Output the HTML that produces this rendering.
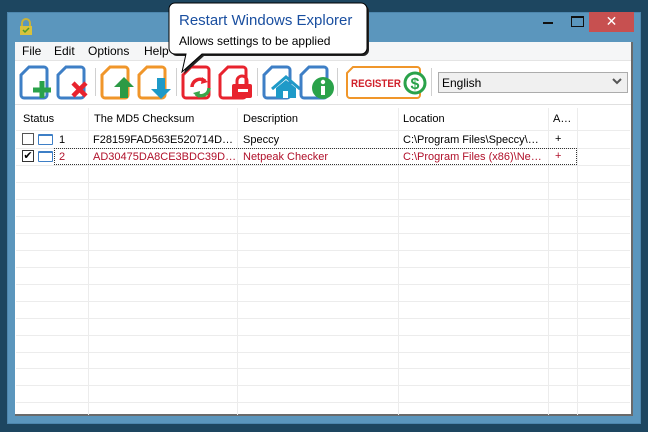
<!DOCTYPE html>
<html><head><style>
body{margin:0;width:648px;height:432px;background:#1d4660;position:relative;overflow:hidden;font-family:"Liberation Sans",sans-serif;font-size:11px;color:#000}
.a{position:absolute}
.t{position:absolute;white-space:nowrap;font-size:11px}
.red{color:#b0102a}
.hl{position:absolute;left:16px;width:614px;height:1px;background:#ececec}
.vl{position:absolute;top:108px;width:1px;height:307px;background:#ececec}
.sep{position:absolute;top:68px;width:1px;height:28px;background:#d0d0d0}
</style></head><body>
<div class="a" style="left:7px;top:12px;width:634px;height:412px;background:#5b96bd;border:1px solid #4d86ad;box-sizing:border-box"></div>
<svg class="a" style="left:19px;top:18px" width="14" height="18"><path d="M3 8V5a4 4 0 0 1 8 0v3" fill="none" stroke="#c9b23a" stroke-width="2"/><rect x="1" y="8" width="12" height="9" fill="#d8c23c"/><path d="M4 12l2 2 4-4" stroke="#4a9a2a" stroke-width="1.5" fill="none"/></svg>
<div class="a" style="left:543px;top:22px;width:10px;height:2px;background:#111"></div>
<div class="a" style="left:571px;top:16px;width:11px;height:8px;border:1px solid #111;border-top-width:2px"></div>
<div class="a" style="left:589px;top:12px;width:45px;height:20px;background:#c75050;color:#fff;font-size:14px;text-align:center;line-height:19px">✕</div>

<div class="a" style="left:15px;top:42px;width:618px;height:374px;background:#fff;border-right:2px solid #6a6a6a;border-bottom:2px solid #6a6a6a;box-sizing:border-box"></div>
<div class="a" style="left:15px;top:42px;width:616px;height:18px;background:#f5f6f7;border-bottom:1px solid #e4e4e4"></div>
<div class="t" style="left:22px;top:44px;font-size:12px">File</div>
<div class="t" style="left:54px;top:44px;font-size:12px">Edit</div>
<div class="t" style="left:88px;top:44px;font-size:12px">Options</div>
<div class="t" style="left:144px;top:44px;font-size:12px">Help</div>

<svg class="a" style="left:0;top:60px" width="648" height="44">
 <defs>
  <path id="pg" d="M10 3H25a3 3 0 0 1 3 3V31a3 3 0 0 1-3 3H5a3 3 0 0 1-3-3V11Z" fill="#fff" stroke-width="3"/>
 </defs>
 <g transform="translate(19,4)"><use href="#pg" stroke="#3e7fc6"/><path d="M14 26h18M23 17v17" stroke="#2aa24a" stroke-width="5"/></g>
 <g transform="translate(56,4)"><use href="#pg" stroke="#3e7fc6"/><path d="M17 19l13 13M30 19l-13 13" stroke="#e8232e" stroke-width="4.5"/></g>
 <g transform="translate(100,4)"><use href="#pg" stroke="#f0962a"/><path d="M24 13l-10 10h6v11h8v-11h6z" fill="#2c9a45"/></g>
 <g transform="translate(137,4)"><use href="#pg" stroke="#f0962a"/><path d="M24 35l-10-10h6v-11h8v11h6z" fill="#1e9ac8"/></g>
 <g transform="translate(181,4)"><use href="#pg" stroke="#e8232e"/><path d="M11 23a8 8 0 0 1 13-6" fill="none" stroke="#e8232e" stroke-width="3.5"/><path d="M28 24a8 8 0 0 1-13 6" fill="none" stroke="#3aa64a" stroke-width="3.5"/><path d="M21 13l6 5-7 2z" fill="#e8232e"/><path d="M18 34l-6-5 7-2z" fill="#3aa64a"/></g>
 <g transform="translate(218,4)"><use href="#pg" stroke="#e8232e"/><path d="M19 21v-4a5 5 0 0 1 10 0v4" fill="none" stroke="#e8232e" stroke-width="3"/><rect x="14" y="20" width="20" height="14" rx="2" fill="#e8232e"/><rect x="20" y="25" width="10" height="3" fill="#fff"/></g>
 <g transform="translate(262,4)"><use href="#pg" stroke="#3e7fc6"/><path d="M10 25l14-12 14 12" fill="none" stroke="#1e9ac8" stroke-width="3"/><path d="M14 24v10h20V24l-10-8z" fill="#1e9ac8"/><rect x="21" y="27" width="5" height="7" fill="#fff"/></g>
 <g transform="translate(299,4)"><use href="#pg" stroke="#3e7fc6"/><circle cx="24" cy="24" r="11" fill="#2aa24a"/><rect x="22" y="22" width="4" height="9" fill="#fff"/><circle cx="24" cy="18" r="2.2" fill="#fff"/></g>
 <g transform="translate(345,4)"><path d="M8 3H72a3 3 0 0 1 3 3V31a3 3 0 0 1-3 3H5a3 3 0 0 1-3-3V9Z" fill="#fff" stroke="#f0962a" stroke-width="2"/>
  <text x="6" y="23" font-family="Liberation Sans" font-weight="bold" font-size="11" fill="#d0202a" textLength="50" lengthAdjust="spacingAndGlyphs">REGISTER</text>
  <circle cx="70" cy="19" r="10" fill="#fff" stroke="#2aa24a" stroke-width="3"/><text x="70" y="25" text-anchor="middle" font-family="Liberation Sans" font-weight="bold" font-size="16" fill="#2aa24a">$</text></g>
</svg>
<div class="sep" style="left:95px"></div>
<div class="sep" style="left:176px"></div>
<div class="sep" style="left:257px"></div>
<div class="sep" style="left:337px"></div>
<div class="sep" style="left:431px"></div>
<div class="a" style="left:438px;top:72px;width:190px;height:21px;border:1px solid #acacac;background:#f0f0f0;box-sizing:border-box"></div>
<div class="t" style="left:442px;top:76px;font-size:12px">English</div>
<svg class="a" style="left:612px;top:78px" width="10" height="8"><path d="M1 1l4 4 4-4" fill="none" stroke="#555" stroke-width="2"/></svg>

<div class="a" style="left:15px;top:104px;width:616px;height:1px;background:#e0e0e0"></div>
<div class="hl" style="top:130px"></div>
<div class="hl" style="top:148px"></div>
<div class="hl" style="top:165px"></div>
<div class="hl" style="top:182px"></div>
<div class="hl" style="top:199px"></div>
<div class="hl" style="top:216px"></div>
<div class="hl" style="top:233px"></div>
<div class="hl" style="top:250px"></div>
<div class="hl" style="top:267px"></div>
<div class="hl" style="top:284px"></div>
<div class="hl" style="top:301px"></div>
<div class="hl" style="top:318px"></div>
<div class="hl" style="top:335px"></div>
<div class="hl" style="top:352px"></div>
<div class="hl" style="top:368px"></div>
<div class="hl" style="top:385px"></div>
<div class="hl" style="top:402px"></div>
<div class="vl" style="left:88px"></div>
<div class="vl" style="left:237px"></div>
<div class="vl" style="left:398px"></div>
<div class="vl" style="left:548px"></div>
<div class="vl" style="left:577px"></div>

<div class="t" style="left:23px;top:113px">Status</div>
<div class="t" style="left:94px;top:113px">The MD5 Checksum</div>
<div class="t" style="left:243px;top:113px">Description</div>
<div class="t" style="left:403px;top:113px">Location</div>
<div class="t" style="left:553px;top:113px">A…</div>

<div class="a" style="left:22px;top:133px;width:12px;height:12px;border:1px solid #555;box-sizing:border-box;background:#fff"></div>
<div class="a" style="left:38px;top:134px;width:15px;height:11px;border:1px solid #3e7fc6;border-top-width:2px;box-sizing:border-box;border-radius:1px"></div>
<div class="t" style="left:59px;top:134px">1</div>
<div class="t" style="left:93px;top:134px">F28159FAD563E520714D…</div>
<div class="t" style="left:243px;top:134px">Speccy</div>
<div class="t" style="left:403px;top:134px">C:\Program Files\Speccy\…</div>
<div class="t" style="left:555px;top:133px">+</div>

<div class="a" style="left:54px;top:148px;width:523px;height:17px;border:1px dotted #333;box-sizing:border-box"></div>
<div class="a" style="left:22px;top:150px;width:12px;height:12px;border:1px solid #333;box-sizing:border-box;background:#fff;font-size:11px;line-height:10px;text-align:center">✔</div>
<div class="a" style="left:38px;top:151px;width:15px;height:11px;border:1px solid #3e7fc6;border-top-width:2px;box-sizing:border-box;border-radius:1px"></div>
<div class="t red" style="left:59px;top:151px">2</div>
<div class="t red" style="left:93px;top:151px">AD30475DA8CE3BDC39D…</div>
<div class="t red" style="left:243px;top:151px">Netpeak Checker</div>
<div class="t red" style="left:403px;top:151px">C:\Program Files (x86)\Ne…</div>
<div class="t red" style="left:555px;top:150px">+</div>

<svg class="a" style="left:164px;top:0" width="212" height="76">
 <path d="M11 3H197a6 6 0 0 1 6 6V48a6 6 0 0 1-6 6H38L18 72L22 54H11a6 6 0 0 1-6-6V9a6 6 0 0 1 6-6Z" fill="#222" transform="translate(2,2)"/>
 <path d="M11 3H197a6 6 0 0 1 6 6V48a6 6 0 0 1-6 6H38L18 72L22 54H11a6 6 0 0 1-6-6V9a6 6 0 0 1 6-6Z" fill="#fff" stroke="#000" stroke-width="1"/>
</svg>
<div class="t" style="left:179px;top:12px;font-size:15px;color:#1a4fa0">Restart Windows Explorer</div>
<div class="t" style="left:179px;top:34px;font-size:12px">Allows settings to be applied</div>
</body></html>
